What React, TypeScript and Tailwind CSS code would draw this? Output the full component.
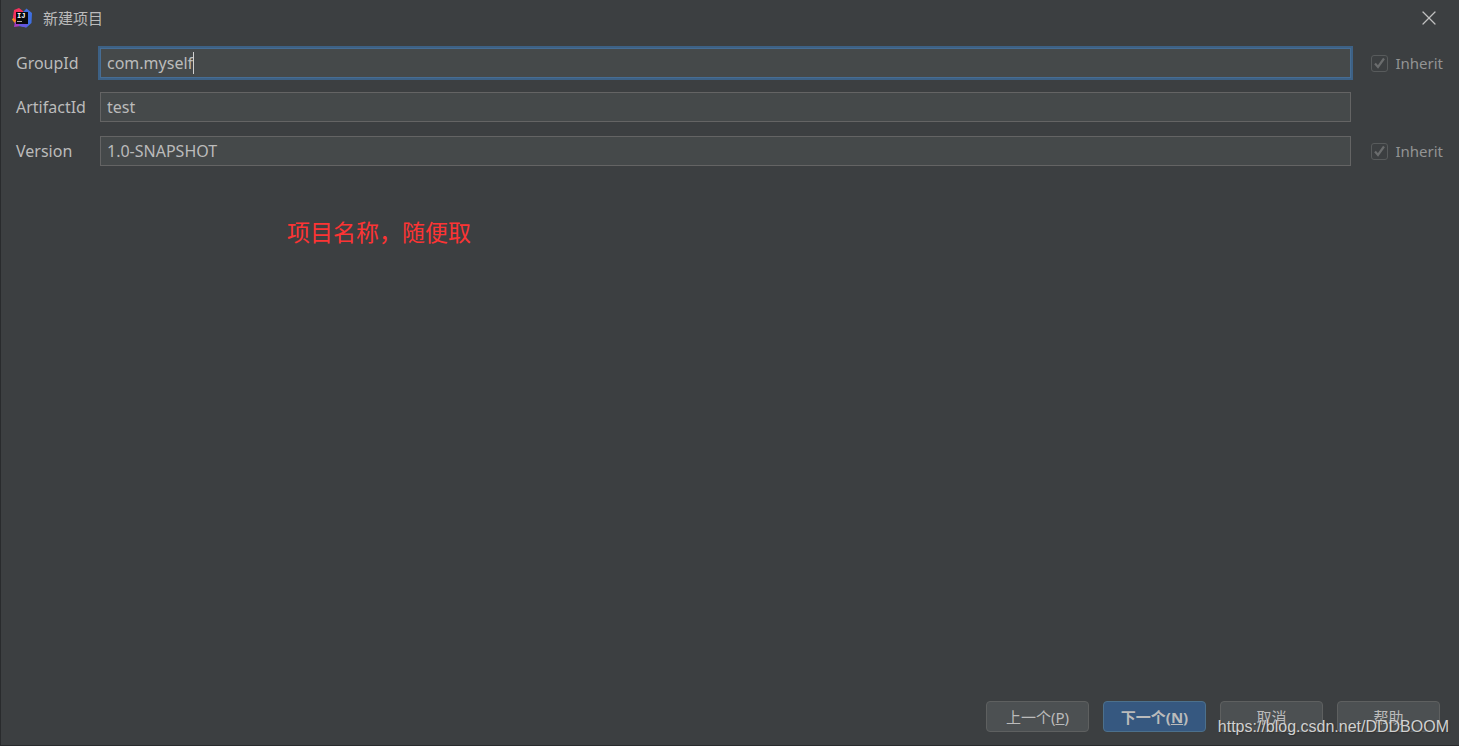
import { useState } from "react";
import { X } from "lucide-react";

type Field = {
  id: string;
  label: string;
  value: string;
  inherit: boolean;
  focused?: boolean;
};

const fields: Field[] = [
  { id: "groupId", label: "GroupId", value: "com.myself", inherit: true, focused: true },
  { id: "artifactId", label: "ArtifactId", value: "test", inherit: false },
  { id: "version", label: "Version", value: "1.0-SNAPSHOT", inherit: true },
];

function IdeaLogo() {
  return (
    <svg className="h-5 w-5 shrink-0" viewBox="0 0 20 20" aria-hidden="true">
      <path d="M0 11.5 2 9 5 12 3 15.5z" fill="#f98b1d" />
      <path d="M2 2 7 0 11.5 3.5 8 8 3 12 1 9z" fill="#f5315d" />
      <path d="M2 19 3 13.5 8 15 9 18z" fill="#a43bc0" />
      <path d="M11 4 14.5 0.5 20 5 19.5 15 14.5 19.5 7 18 12 9z" fill="#3f6fe0" />
      <path d="M7 16h9l-2 3.5L8 18z" fill="#6657df" />
      <rect x="4" y="4" width="12" height="12" fill="#08090b" />
      <text x="5" y="10" fill="#fff" fontSize="7" fontWeight="700" fontFamily="Liberation Mono, monospace">
        IJ
      </text>
      <rect x="5" y="13" width="5" height="1" fill="#aaa" />
    </svg>
  );
}

function InheritBox({ id }: { id: string }) {
  return (
    <label htmlFor={id} className="flex items-center gap-[7px] text-[15px] text-[#939494]">
      <span className="relative h-[17px] w-[17px]">
        <input
          id={id}
          type="checkbox"
          defaultChecked
          disabled
          className="absolute inset-0 appearance-none rounded-[3px] border border-[#585b5c]"
        />
        <svg className="relative h-full w-full" viewBox="0 0 17 17" fill="none" aria-hidden="true">
          <path d="M4 8.5 7 12 13 3.5" stroke="#6a6c6d" strokeWidth="2.2" />
        </svg>
      </span>
      Inherit
    </label>
  );
}

function FieldRow({ field }: { field: Field }) {
  const [value, setValue] = useState(field.value);

  return (
    <>
      <label htmlFor={field.id}>{field.label}</label>
      <div
        className={
          field.focused
            ? "relative flex h-[30px] border border-[#466d94] bg-[#45494a] outline-2 outline-[#3d6185]"
            : "relative flex h-[30px] border border-[#646464] bg-[#45494a]"
        }
      >
        <input
          id={field.id}
          value={value}
          onChange={(e) => setValue(e.target.value)}
          className="w-full bg-transparent px-1.5 outline-none"
        />
        {/* Text caret after the typed value */}
        {field.focused && (
          <span className="pointer-events-none absolute inset-y-0 left-1.5 flex items-center whitespace-pre">
            <span className="invisible">{value}</span>
            <span className="h-[22px] w-px bg-[#d0d0d0]" />
          </span>
        )}
      </div>
      <div className="pl-5">{field.inherit && <InheritBox id={`${field.id}-inherit`} />}</div>
    </>
  );
}

const buttonClass =
  "h-[31px] w-[103px] rounded-[4px] border border-[#5e6060] bg-[#4c5052] text-[#bbbbbb]";

export default function App() {
  return (
    <div className="relative flex min-h-screen flex-col border-b border-l border-[#292b2d] bg-[#3c3f41] font-['Noto_Sans','Noto_Sans_CJK_SC',sans-serif] text-[15px] leading-5 text-[#bbbbbb]">
      <header className="flex h-9 items-center justify-between pr-[18px] pl-[11px]">
        <div className="flex items-center gap-[11px]">
          <IdeaLogo />
          <h1>新建项目</h1>
        </div>
        <button type="button" aria-label="关闭" className="text-[#c0c0c0]">
          <X className="h-6 w-6" strokeWidth={1.2} />
        </button>
      </header>

      <main className="flex-1">
        <form className="grid grid-cols-[84px_1fr_auto] items-center gap-y-3.5 pt-3 pr-4 pl-[15px] text-base leading-5">
          {fields.map((field) => (
            <FieldRow key={field.id} field={field} />
          ))}
        </form>
        <p className="mt-[50px] pl-[286px] text-[23px] leading-8 text-[#fc3434]">项目名称，随便取</p>
      </main>

      <footer className="flex justify-end gap-3.5 pr-[19px] pb-[13px]">
        <button type="button" className={buttonClass}>
          上一个(<u>P</u>)
        </button>
        <button
          type="button"
          className="h-[31px] w-[103px] rounded-[4px] border border-[#4c708c] bg-[#365880] font-bold text-[#bbbbbb]"
        >
          下一个(<u>N</u>)
        </button>
        <button type="button" className={buttonClass}>
          取消
        </button>
        <button type="button" className={buttonClass}>
          帮助
        </button>
      </footer>

      <span className="pointer-events-none absolute right-2.5 bottom-1.5 font-['Liberation_Sans',sans-serif] text-base text-[#d0d1d1] [text-shadow:1px_1px_1px_#333]">
        https://blog.csdn.net/DDDBOOM
      </span>
    </div>
  );
}
